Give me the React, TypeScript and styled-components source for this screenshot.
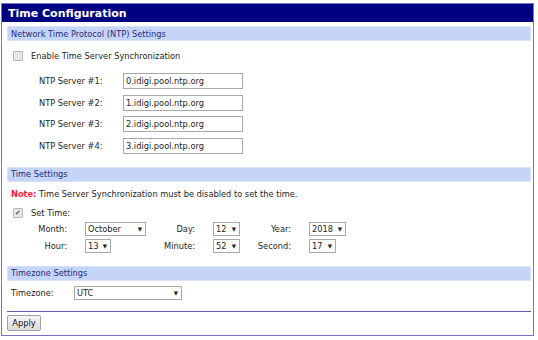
import React from "react";
import styled, { createGlobalStyle } from "styled-components";

const GlobalStyle = createGlobalStyle`
  html, body {
    margin: 0;
    padding: 0;
    background: #fff;
  }
  body {
    font-family: "DejaVu Sans", Verdana, sans-serif;
    font-size: 8.25px;
    color: #1e1e1e;
  }
`;

const Panel = styled.div`
  margin: 3px 4px 0 1px;
  width: 533px;
  height: 333px;
  box-sizing: border-box;
  border: 1px solid #7474c4;
  display: flex;
  flex-direction: column;
`;

const TitleBar = styled.div`
  height: 18px;
  background: #000080;
  color: #fff;
  font-family: "DejaVu Sans", Verdana, sans-serif;
  font-weight: bold;
  font-size: 11px;
  display: flex;
  align-items: center;
  padding-left: 6px;
`;

const Body = styled.div`
  flex: 1;
  display: flex;
  flex-direction: column;
  padding: 0 2px 0 5px;
`;

const SectionHeader = styled.div<{ $top: number }>`
  margin-top: ${(p) => p.$top}px;
  height: 15px;
  box-sizing: border-box;
  background: #c4d5f8;
  border: 1px solid #d6e1fa;
  color: #2b2b7e;
  display: flex;
  align-items: center;
  padding-left: 3px;
`;

const CheckRow = styled.label<{ $top: number }>`
  margin-top: ${(p) => p.$top}px;
  display: flex;
  align-items: center;
  gap: 8px;
  padding-left: 6px;
  height: 10px;
`;

const Checkbox = styled.input.attrs({ type: "checkbox" })`
  appearance: none;
  margin: 0;
  width: 10px;
  height: 10px;
  box-sizing: border-box;
  border: 1px solid #b8b8b8;
  border-radius: 1px;
  background: #e8e8e8;
  display: flex;
  align-items: center;
  justify-content: center;

  &:checked::after {
    content: "✔";
    font-size: 7px;
    line-height: 1;
    color: #5a5a5a;
  }
`;

const ServerList = styled.div`
  margin-top: 12px;
  display: flex;
  flex-direction: column;
  gap: 5.6px;
`;

const ServerRow = styled.div`
  display: grid;
  grid-template-columns: 84px auto;
  align-items: center;
  padding-left: 32px;
`;

const TextInput = styled.input`
  width: 120px;
  height: 16px;
  box-sizing: border-box;
  margin: 0;
  border: 1px solid #a9a9a9;
  padding: 0 2px;
  font-family: "DejaVu Sans", Verdana, sans-serif;
  font-size: 8.25px;
  color: #1e1e1e;
  background: #fff;
`;

const Note = styled.div`
  margin-top: 7px;
  height: 10px;
  display: flex;
  align-items: center;
  padding-left: 4px;
  white-space: pre;
`;

const NoteTag = styled.span`
  color: #ff1a3c;
  font-weight: bold;
`;

const TimeGrid = styled.div`
  margin-top: 4px;
  display: grid;
  grid-template-columns: 78px 65px 63px 37px 59px auto;
  grid-auto-rows: 14px;
  row-gap: 3px;
  align-items: center;
`;

const FieldLabel = styled.span`
  text-align: right;
  padding-right: 18px;
`;

const SelectWrap = styled.span<{ $width: number }>`
  position: relative;
  display: inline-flex;
  width: ${(p) => p.$width}px;
  height: 14px;
`;

const Select = styled.select`
  appearance: none;
  width: 100%;
  height: 100%;
  margin: 0;
  box-sizing: border-box;
  border: 1px solid #a9a9a9;
  border-radius: 0;
  background: #fff;
  padding: 0 0 0 2px;
  font-family: "DejaVu Sans", Verdana, sans-serif;
  font-size: 8.25px;
  color: #1e1e1e;
`;

const Arrow = styled.span`
  position: absolute;
  right: 4px;
  top: 50%;
  transform: translateY(-50%);
  font-size: 5.5px;
  color: #222;
  pointer-events: none;
`;

const TimezoneRow = styled.div`
  margin-top: 5px;
  display: grid;
  grid-template-columns: 63px auto;
  align-items: center;
  padding-left: 4px;
`;

const Divider = styled.hr`
  margin: 11px 0 0;
  border: 0;
  border-top: 1px solid #5c5cae;
`;

const ApplyButton = styled.button`
  margin-top: 3px;
  align-self: flex-start;
  width: 34px;
  height: 16px;
  padding: 0;
  box-sizing: border-box;
  border: 1px solid #a3a3a3;
  border-radius: 2px;
  background: linear-gradient(#f6f6f6, #dadada);
  font-family: "DejaVu Sans", Verdana, sans-serif;
  font-size: 8.25px;
  color: #111;
`;

const Dropdown: React.FC<{ width: number; value: string; options: string[] }> = ({
  width,
  value,
  options,
}) => (
  <SelectWrap $width={width}>
    <Select defaultValue={value}>
      {options.map((o) => (
        <option key={o}>{o}</option>
      ))}
    </Select>
    <Arrow>▼</Arrow>
  </SelectWrap>
);

const months = [
  "January",
  "February",
  "March",
  "April",
  "May",
  "June",
  "July",
  "August",
  "September",
  "October",
  "November",
  "December",
];

const range = (from: number, to: number) =>
  Array.from({ length: to - from + 1 }, (_, i) => String(from + i));

const servers = [
  "0.idigi.pool.ntp.org",
  "1.idigi.pool.ntp.org",
  "2.idigi.pool.ntp.org",
  "3.idigi.pool.ntp.org",
];

export default function App() {
  return (
    <>
      <GlobalStyle />
      <Panel>
        <TitleBar>Time Configuration</TitleBar>
        <Body>
          <SectionHeader $top={4}>Network Time Protocol (NTP) Settings</SectionHeader>
          <CheckRow $top={10}>
            <Checkbox />
            Enable Time Server Synchronization
          </CheckRow>
          <ServerList>
            {servers.map((s, i) => (
              <ServerRow key={s}>
                <span>NTP Server #{i + 1}:</span>
                <TextInput defaultValue={s} />
              </ServerRow>
            ))}
          </ServerList>

          <SectionHeader $top={13}>Time Settings</SectionHeader>
          <Note>
            <NoteTag>Note:</NoteTag> Time Server Synchronization must be disabled to set the time.
          </Note>
          <CheckRow $top={9}>
            <Checkbox defaultChecked />
            Set Time:
          </CheckRow>
          <TimeGrid>
            <FieldLabel>Month:</FieldLabel>
            <span>
              <Dropdown width={61} value="October" options={months} />
            </span>
            <FieldLabel>Day:</FieldLabel>
            <span>
              <Dropdown width={27} value="12" options={range(1, 31)} />
            </span>
            <FieldLabel>Year:</FieldLabel>
            <span>
              <Dropdown width={37} value="2018" options={range(2000, 2037)} />
            </span>

            <FieldLabel>Hour:</FieldLabel>
            <span>
              <Dropdown width={26} value="13" options={range(0, 23)} />
            </span>
            <FieldLabel>Minute:</FieldLabel>
            <span>
              <Dropdown width={27} value="52" options={range(0, 59)} />
            </span>
            <FieldLabel>Second:</FieldLabel>
            <span>
              <Dropdown width={27} value="17" options={range(0, 59)} />
            </span>
          </TimeGrid>

          <SectionHeader $top={13}>Timezone Settings</SectionHeader>
          <TimezoneRow>
            <span>Timezone:</span>
            <span>
              <Dropdown width={108} value="UTC" options={["UTC", "GMT", "EST", "PST"]} />
            </span>
          </TimezoneRow>
          <Divider />
          <ApplyButton>Apply</ApplyButton>
        </Body>
      </Panel>
    </>
  );
}
